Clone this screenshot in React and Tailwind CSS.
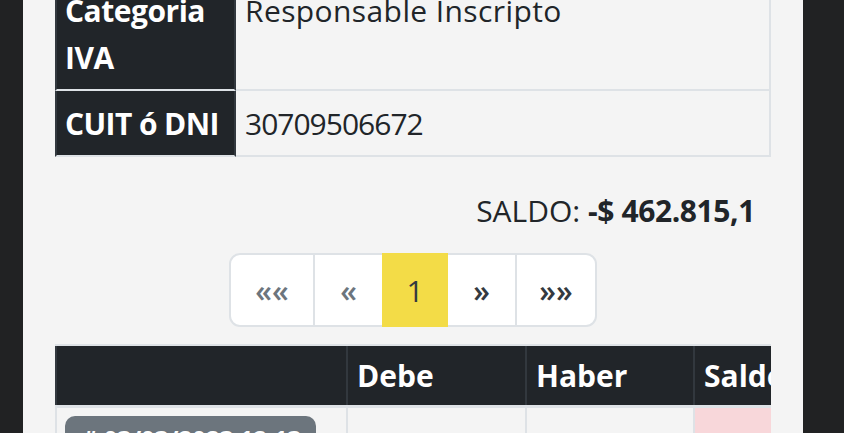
import React from "react";

const Pager = () => {
  return (
    <ul className="flex justify-center">
      <li className="w-[86px] h-[74px] flex items-center justify-center bg-white border-2 border-[#dee2e6] rounded-l-[11px] text-[#6c757d] font-semibold">
        ««
      </li>
      <li className="w-[71px] h-[74px] -ml-[2px] flex items-center justify-center bg-white border-2 border-[#dee2e6] text-[#6c757d] font-semibold">
        «
      </li>
      <li className="relative z-10 w-[66px] h-[74px] -ml-[2px] flex items-center justify-center bg-[#f3dc47] border-2 border-[#f3dc47] text-[#343a40]">
        1
      </li>
      <li className="w-[71px] h-[74px] -ml-[2px] flex items-center justify-center bg-white border-2 border-[#dee2e6] text-[#343a40] font-semibold">
        »
      </li>
      <li className="w-[82px] h-[74px] -ml-[2px] flex items-center justify-center bg-white border-2 border-[#dee2e6] rounded-r-[11px] text-[#343a40] font-semibold">
        »»
      </li>
    </ul>
  );
};

const App = () => {
  return (
    <div className="h-[433px] w-[844px] overflow-hidden flex bg-[#212223] font-['Open_Sans','Noto_Sans',sans-serif] text-[30px] leading-[47px] text-[#212529]">
      <div className="w-[23px] shrink-0 bg-[#212223]"></div>

      <main className="w-[780px] shrink-0 bg-[#f4f4f4] px-8">
        <div className="-mt-[22px]">
          {/* datos del cliente */}
          <div>
            <div className="flex">
              <div className="w-[181px] shrink-0 bg-[#212529] text-white font-bold tracking-[-0.5px] border-l-2 border-l-[#32383e] border-r-2 border-r-[#32383e] border-b-2 border-b-[#dee2e6] px-2 py-[8.5px]">
                Categoria IVA
              </div>
              <div className="flex-1 border-b-2 border-r-2 border-[#dee2e6] px-[9px] py-[8.5px] tracking-[0.4px]">
                Responsable Inscripto
              </div>
            </div>
            <div className="flex">
              <div className="w-[181px] shrink-0 bg-[#212529] text-white font-bold tracking-[-0.6px] border-l-2 border-l-[#32383e] border-r-2 border-r-[#32383e] border-b-2 border-b-[#dee2e6] px-2 py-[8.5px] whitespace-nowrap">
                CUIT ó DNI
              </div>
              <div className="flex-1 border-b-2 border-r-2 border-[#dee2e6] px-[9px] py-[8.5px] tracking-[-1px]">
                30709506672
              </div>
            </div>
          </div>

          <p className="mt-[30px] text-right pr-4">
            SALDO: <span className="font-bold tracking-[-0.4px]">-$ 462.815,1</span>
          </p>

          <div className="mt-[19px]">
            <Pager />
          </div>

          {/* movimientos */}
          <div className="mt-[17px] overflow-hidden">
            <div className="w-[960px]">
              <div className="flex border-t-2 border-[#dee2e6] bg-[#212529] text-white font-bold">
                <div className="w-[291px] shrink-0 border-l-2 border-[#32383e] px-[9px] py-[6px]">&nbsp;</div>
                <div className="w-[179px] shrink-0 border-l-2 border-[#32383e] px-[9px] py-[6px]">Debe</div>
                <div className="w-[168px] shrink-0 border-l-2 border-[#32383e] px-[9px] py-[6px]">Haber</div>
                <div className="w-[200px] shrink-0 border-l-2 border-[#32383e] px-[9px] py-[6px]">Saldo</div>
              </div>
              <div className="flex border-t-[3px] border-[#dee2e6] h-[80px]">
                <div className="w-[291px] shrink-0 border-l-2 border-[#dee2e6] pl-2 pt-[8px]">
                  <div className="w-[251px] bg-[#6c757d] text-white font-bold text-[24px] leading-[30px] rounded-[10px] px-[17px] pt-[8px] pb-[6px] whitespace-nowrap">
                    # 03/03/2023 12:13
                  </div>
                </div>
                <div className="w-[179px] shrink-0 border-l-2 border-[#dee2e6]"></div>
                <div className="w-[168px] shrink-0 border-l-2 border-[#dee2e6]"></div>
                <div className="w-[200px] shrink-0 border-l-2 border-[#dee2e6] bg-[#f8d7da]"></div>
              </div>
            </div>
          </div>
        </div>
      </main>

      <div className="flex-1 bg-[#212223]"></div>
    </div>
  );
};

export default App;
